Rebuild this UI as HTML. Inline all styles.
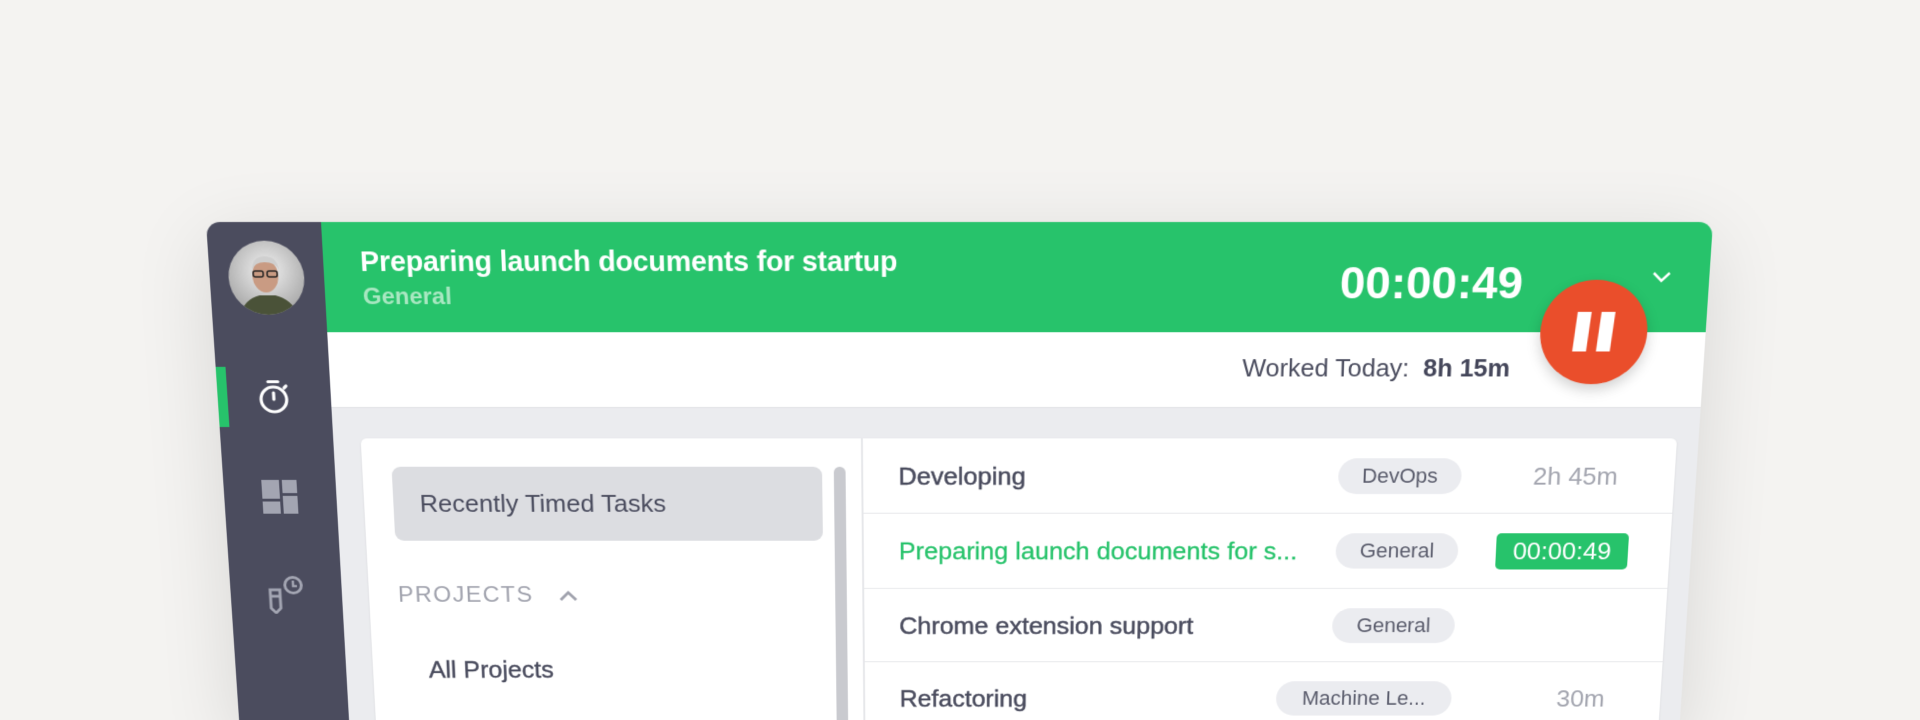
<!DOCTYPE html>
<html><head><meta charset="utf-8"><style>
*{margin:0;padding:0;box-sizing:border-box}
html,body{width:1920px;height:720px;overflow:hidden;background:#f4f3f1;font-family:"Liberation Sans",sans-serif}
#wrap{position:absolute;left:0;top:0;width:1920px;height:720px;overflow:hidden}
#win{position:absolute;left:206px;top:222px;width:1507px;height:540px;border-radius:14px 14px 0 0;overflow:hidden;background:#ebecef;transform-origin:50% 0;transform:perspective(2000px) rotateX(-10deg);box-shadow:0 20px 80px rgba(0,0,0,.12)}
.side{position:absolute;left:0;top:0;width:115px;height:100%;background:#4b4c5e}
.hdr{position:absolute;left:115px;top:0;right:0;height:113px;background:#27c36b}
.white{position:absolute;left:115px;top:113px;right:0;height:79px;background:#fff;border-bottom:1px solid #dfe0e4}
.abs{position:absolute;white-space:nowrap}
.card{position:absolute;left:143px;top:224px;width:1342px;height:420px;background:#fff;border-radius:6px;box-shadow:0 1px 3px rgba(0,0,0,.08)}
.row{position:absolute;left:510px;right:0;height:81px;border-bottom:1.5px solid #e6e7ea}
.row .t{position:absolute;left:38px;top:50%;transform:translateY(-50%);font-size:26px;color:#4a4c5e;-webkit-text-stroke:.5px #4a4c5e}
.pill{position:absolute;top:50%;transform:translateY(-50%);height:38px;line-height:38px;border-radius:19px;background:#ebecf0;color:#5a5c6c;font-size:21.5px;text-align:center}
.tm{position:absolute;right:58px;top:50%;transform:translateY(-50%);font-size:26px;color:#a4a6b0}
</style></head><body>
<div id="wrap">
<div id="win">
  <div class="side"></div>
  <div class="abs" style="left:0;top:149px;width:10px;height:63px;background:#27c36b"></div>
  <svg class="abs" style="left:19px;top:19px" width="76" height="76" viewBox="0 0 76 76">
    <defs><clipPath id="c"><circle cx="38" cy="38" r="38"/></clipPath>
    <radialGradient id="g" cx="50%" cy="40%" r="60%"><stop offset="0" stop-color="#f2f2f2"/><stop offset="1" stop-color="#a9a9a9"/></radialGradient></defs>
    <g clip-path="url(#c)">
      <rect width="76" height="76" fill="url(#g)"/>
      <path d="M10 76 Q14 60 30 56 L46 56 Q62 60 68 76Z" fill="#4a5238"/>
      <ellipse cx="37" cy="36" rx="13" ry="17" fill="#c99b83"/>
      <path d="M24 30 Q25 16 37 16 Q50 16 51 30 Q48 22 37 22 Q27 22 24 30Z" fill="#cfcfcf"/>
      <rect x="25" y="31" width="10" height="6" rx="2" fill="none" stroke="#222" stroke-width="1.5"/>
      <rect x="39" y="31" width="10" height="6" rx="2" fill="none" stroke="#222" stroke-width="1.5"/>
    </g>
  </svg>
  <svg class="abs" style="left:38px;top:161px" width="38" height="38" viewBox="0 0 38 38" fill="none" stroke="#fff" stroke-width="3.2" stroke-linecap="round">
    <circle cx="19" cy="22" r="13"/><line x1="14" y1="3.5" x2="24" y2="3.5"/><line x1="19" y1="15" x2="19" y2="22"/><line x1="30" y1="10" x2="32" y2="8"/>
  </svg>
  <svg class="abs" style="left:39px;top:268px" width="36" height="36" viewBox="0 0 36 36" fill="#a3a5b2">
    <rect x="0" y="0" width="18" height="20"/><rect x="21" y="0" width="15" height="14"/><rect x="0" y="23" width="18" height="13"/><rect x="21" y="17" width="15" height="19"/>
  </svg>
  <svg class="abs" style="left:37px;top:370px" width="40" height="42" viewBox="0 0 40 42" fill="none" stroke="#a3a5b2" stroke-width="3">
    <path d="M4 16 H14 V36 L9 41 L4 36 Z"/><line x1="4" y1="23" x2="14" y2="23"/>
    <circle cx="28" cy="11" r="8.5"/><path d="M28 6 V12 H32" stroke-width="2.5"/>
  </svg>
  <div class="hdr"></div>
  <div class="abs" style="left:152px;top:25px;font-size:28.7px;font-weight:bold;color:#fff;letter-spacing:-.2px">Preparing launch documents for startup</div>
  <div class="abs" style="left:153px;top:63px;font-size:24px;font-weight:bold;color:#a8e7c1">General</div>
  <div class="abs" style="left:1136px;top:35px;font-size:46px;font-weight:bold;color:#fff">00:00:49</div>
  <svg class="abs" style="left:1449px;top:49px" width="20" height="14" viewBox="0 0 20 14" fill="none" stroke="#fff" stroke-width="2.5"><path d="M2 3 L10 11 L18 3"/></svg>
  <div class="white"></div>
  <div class="abs" style="left:1040px;top:137px;font-size:25.5px;color:#4a4c5e">Worked Today:&nbsp; <b style="color:#44465a">8h 15m</b></div>
  <div class="abs" style="left:1340px;top:59px;width:108px;height:108px;border-radius:50%;background:#ea4e2b;box-shadow:0 6px 14px rgba(0,0,0,.18)">
    <div class="abs" style="left:35px;top:33px;width:14px;height:41px;background:#fff;transform:skewX(-5deg)"></div>
    <div class="abs" style="left:59px;top:33px;width:14px;height:41px;background:#fff;transform:skewX(-5deg)"></div>
  </div>
  <div class="card">
    <div class="abs" style="left:30px;top:30px;width:440px;height:79px;border-radius:9px;background:#dcdde1"></div>
    <div class="abs" style="left:57px;top:54px;font-size:26px;color:#4a4c5e">Recently Timed Tasks</div>
    <div class="abs" style="left:482px;top:30px;width:12px;height:420px;border-radius:6px;background:#c9cacf"></div>
    <div class="abs" style="left:30px;top:154px;font-size:24px;color:#a0a2ad;letter-spacing:1.5px">PROJECTS</div>
    <svg class="abs" style="left:196px;top:162px" width="20" height="14" viewBox="0 0 20 14" fill="none" stroke="#a0a2ad" stroke-width="3"><path d="M2 11 L10 3 L18 11"/></svg>
    <div class="abs" style="left:58px;top:234px;font-size:26px;color:#4a4c5e;-webkit-text-stroke:.4px #4a4c5e">All Projects</div>
    <div class="abs" style="left:510px;top:0;width:1.5px;height:420px;background:#e6e7ea"></div>
    <div class="row" style="top:0;height:80px"><div class="t">Developing</div><div class="pill" style="right:218px;width:126px">DevOps</div><div class="tm">2h 45m</div></div>
    <div class="row" style="top:80px"><div class="t" style="color:#27c36b;-webkit-text-stroke:.3px #27c36b">Preparing launch documents for s...</div><div class="pill" style="right:218px;width:126px">General</div>
      <div class="abs" style="right:43px;top:21px;width:136px;height:39px;border-radius:5px;background:#27c36b;color:#fff;font-size:26px;text-align:center;line-height:39px">00:00:49</div></div>
    <div class="row" style="top:161px;height:80px"><div class="t">Chrome extension support</div><div class="pill" style="right:218px;width:127px">General</div></div>
    <div class="row" style="top:241px"><div class="t">Refactoring</div><div class="pill" style="right:218px;width:183px">Machine Le...</div><div class="tm">30m</div></div>
  </div>
</div>
</div>
</body></html>
